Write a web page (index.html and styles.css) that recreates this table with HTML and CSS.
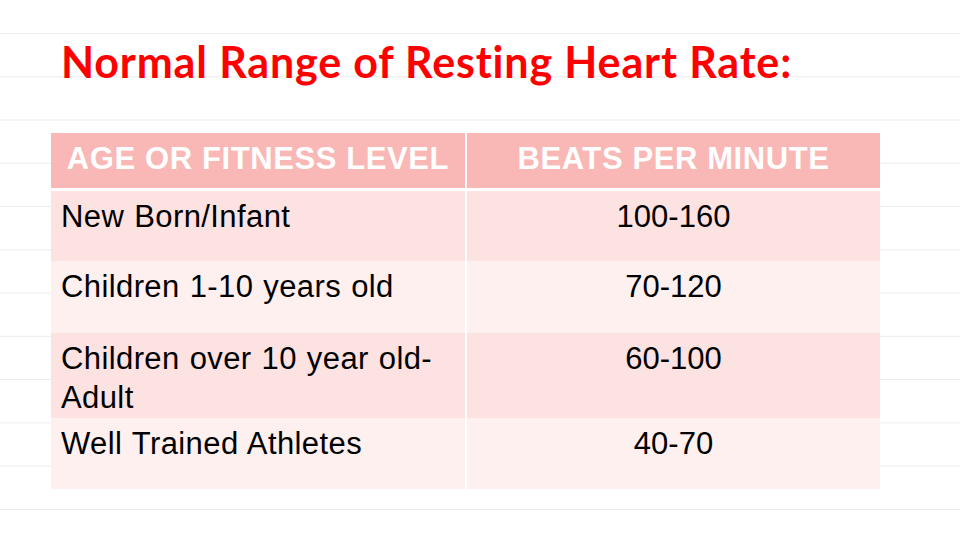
FILE: index.html
```html
<!DOCTYPE html>
<html lang="en">
<head>
<meta charset="utf-8">
<title>Normal Range of Resting Heart Rate</title>
<link rel="stylesheet" href="styles.css">
</head>
<body>
<main class="slide">
  <h1 class="title">Normal Range of Resting Heart Rate:</h1>
  <section class="table">
    <div class="row head">
      <div class="cell">AGE OR FITNESS LEVEL</div>
      <div class="cell num">BEATS PER MINUTE</div>
    </div>
    <div class="row odd r1">
      <div class="cell">New Born/Infant</div>
      <div class="cell num">100-160</div>
    </div>
    <div class="row even r2">
      <div class="cell">Children 1-10 years old</div>
      <div class="cell num">70-120</div>
    </div>
    <div class="row odd r3">
      <div class="cell">Children over 10 year old-<br>Adult</div>
      <div class="cell num">60-100</div>
    </div>
    <div class="row even r4">
      <div class="cell">Well Trained Athletes</div>
      <div class="cell num">40-70</div>
    </div>
  </section>
</main>
</body>
</html>
```

FILE: styles.css
```css
html, body {
  margin: 0;
  padding: 0;
  background: #ffffff;
}

.slide {
  width: 960px;
  height: 540px;
  box-sizing: border-box;
  padding: 41px 0 0 51px;
  overflow: hidden;
  background-color: #ffffff;
  background-image: linear-gradient(to bottom, #ebebeb 0, #ebebeb 1px, transparent 1px);
  background-size: 100% 43.27px;
  background-position: 0 33px;
}

.title {
  margin: 0 0 50px 10px;
  height: 42px;
  font-family: "Lato", "Open Sans", sans-serif;
  font-weight: 700;
  font-size: 43px;
  line-height: 42px;
  letter-spacing: 0.85px;
  color: #ff0000;
  white-space: nowrap;
}

.table {
  width: 829px;
  font-family: "Liberation Sans", Arial, sans-serif;
}

.row {
  display: grid;
  grid-template-columns: 414px 415px;
}

.cell {
  box-sizing: border-box;
  padding: 6px 10px 0 10px;
  font-size: 31px;
  line-height: 39px;
  letter-spacing: 0.4px;
  word-spacing: 1px;
  color: #000000;
}

.cell.num {
  border-left: 2px solid #ffffff;
  text-align: center;
  letter-spacing: 0;
}

.head {
  height: 55px;
  margin-bottom: 3px;
  background: #f9b7b5;
}

.head .cell {
  padding-top: 8px;
  font-weight: 700;
  color: #ffffff;
  text-align: center;
  line-height: 35px;
  letter-spacing: 0.6px;
  word-spacing: 0;
}

.odd { background: #fde2e2; }
.even { background: #fdf0ef; }

.r1 { height: 70px; }
.r2 { height: 72px; }
.r3 { height: 85px; }
.r4 { height: 71px; }
```
